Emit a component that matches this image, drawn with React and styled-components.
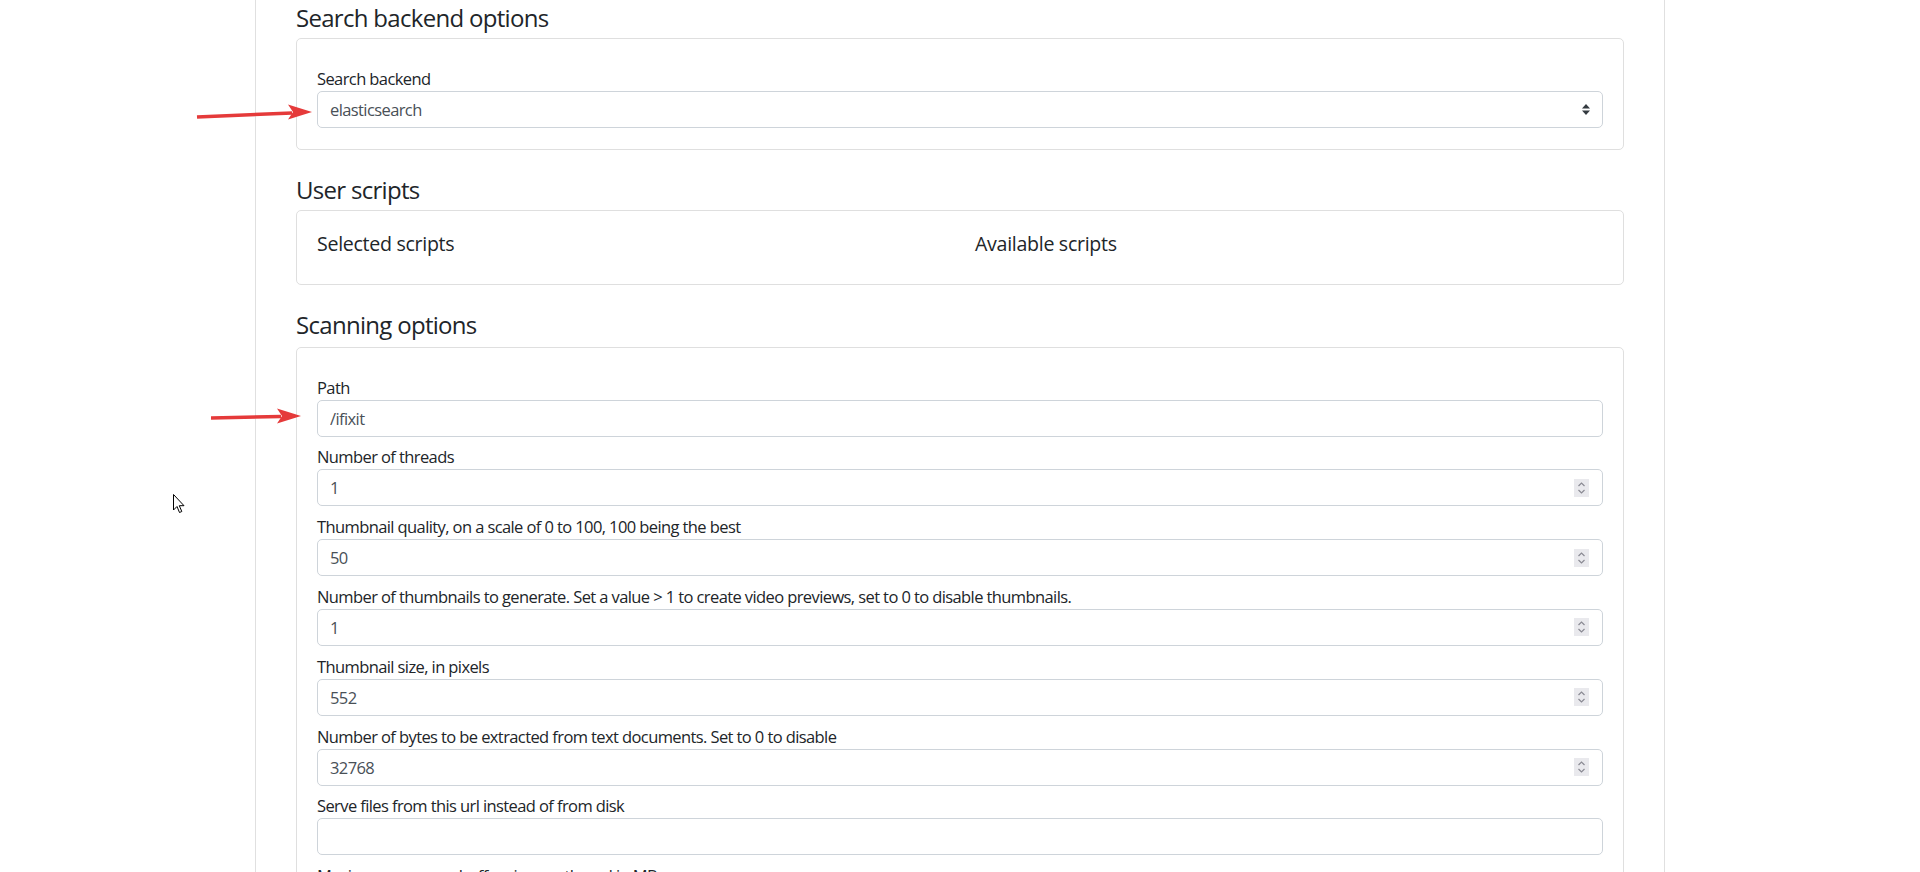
import React from 'react';
import styled, { createGlobalStyle } from 'styled-components';

const GlobalStyle = createGlobalStyle`
  html, body {
    margin: 0;
    padding: 0;
    background: #fff;
    overflow: hidden;
  }
  body {
    font-family: "Open Sans", "Noto Sans", sans-serif;
    color: #212529;
  }
  * {
    box-sizing: border-box;
  }
`;

const Page = styled.div`
  position: relative;
  height: 872px;
  overflow: hidden;
`;

const Container = styled.div`
  /* 가운데 컨테이너, 좌우 회색 선 */
  width: 1410px;
  min-height: 872px;
  margin: 0 auto;
  padding: 3px 40px 0 40px;
  border-left: 1px solid #e0e0e0;
  border-right: 1px solid #e0e0e0;
`;

const Section = styled.section`
  & + & {
    margin-top: 25px;
  }
`;

const SectionTitle = styled.h5`
  margin: 0 0 ${props => props.gap || 6}px 0;
  font-size: 24px;
  line-height: 29.4px;
  font-weight: 400;
  letter-spacing: -0.7px;
  color: #212529;
`;

const Card = styled.div`
  border: 1px solid #dfdfdf;
  border-radius: 5px;
  padding: ${props => props.pad || '27px 20px 21px 20px'};
`;

const Columns = styled.div`
  display: grid;
  grid-template-columns: 1fr 1fr;
  column-gap: 30px;
`;

const ColumnTitle = styled.h6`
  margin: 0;
  font-size: 19.6px;
  line-height: 23.5px;
  font-weight: 400;
  letter-spacing: -0.3px;
  color: #212529;
`;

const FormGroup = styled.div`
  & + & {
    margin-top: 7.8px;
  }
`;

const Label = styled.label`
  display: block;
  margin: 0;
  padding-top: 1px;
  font-size: 16.5px;
  line-height: 24px;
  letter-spacing: -0.6px;
  color: #212529;
`;

const Control = styled.div`
  position: relative;
`;

const Input = styled.input`
  display: block;
  width: 100%;
  height: 37px;
  margin: 0;
  padding: 0 40px 0 12px;
  border: 1px solid #ced4da;
  border-radius: 5px;
  background: #fff;
  font-family: inherit;
  font-size: 16.5px;
  letter-spacing: -0.6px;
  color: #495057;
  outline: none;
  appearance: none;
`;

const Adornment = styled.span`
  position: absolute;
  top: 50%;
  right: ${props => props.right || 14}px;
  transform: translateY(-50%);
  display: flex;
  align-items: center;
  justify-content: center;
  width: ${props => props.w || 15}px;
  height: ${props => props.h || 18}px;
  background: ${props => props.bg || 'transparent'};
  pointer-events: none;
`;

const Arrow = styled.svg`
  position: absolute;
  left: ${props => props.x}px;
  top: ${props => props.y}px;
  overflow: visible;
`;

const Cursor = styled.svg`
  position: absolute;
  left: 173px;
  top: 494px;
`;

function SelectCaret() {
  return (
    <Adornment right={12} w={10} h={12}>
      <svg width="8" height="11" viewBox="0 0 8 11">
        <path d="M4 0 L8 4.5 L0 4.5 Z" fill="#343a40" />
        <path d="M0 6.5 L8 6.5 L4 11 Z" fill="#343a40" />
      </svg>
    </Adornment>
  );
}

function Spinner() {
  return (
    <Adornment bg="#e9e9ed">
      <svg width="9" height="14" viewBox="0 0 9 14">
        <path d="M1.5 5 L4.5 2 L7.5 5" fill="none" stroke="#8a8a93" strokeWidth="1.2" />
        <path d="M1.5 9 L4.5 12 L7.5 9" fill="none" stroke="#8a8a93" strokeWidth="1.2" />
      </svg>
    </Adornment>
  );
}

const scanFields = [
  { label: 'Path', value: '/ifixit' },
  { label: 'Number of threads', value: '1', number: true },
  { label: 'Thumbnail quality, on a scale of 0 to 100, 100 being the best', value: '50', number: true },
  {
    label: 'Number of thumbnails to generate. Set a value > 1 to create video previews, set to 0 to disable thumbnails.',
    value: '1',
    number: true,
  },
  { label: 'Thumbnail size, in pixels', value: '552', number: true },
  { label: 'Number of bytes to be extracted from text documents. Set to 0 to disable', value: '32768', number: true },
  { label: 'Serve files from this url instead of from disk', value: '' },
  { label: 'Maximum memory buffer size per thread in MB', value: '2000', number: true },
];

function RedArrow({ x, y, length, rise }) {
  // 빨간 화살표 (주석 표시)
  const head = 24;
  return (
    <Arrow x={x} y={y - 10} width={length} height={20} viewBox={`0 0 ${length} 20`}>
      <line x1="0" y1={10 + rise} x2={length - head + 4} y2={10 + rise * 0.2} stroke="#e53a3a" strokeWidth="3.5" />
      <path
        d={`M${length} 10 L${length - head} ${2.5} L${length - head + 5} 10 L${length - head} ${17.5} Z`}
        fill="#e53a3a"
      />
    </Arrow>
  );
}

function App() {
  return (
    <Page>
      <GlobalStyle />
      <Container>
        <Section>
          <SectionTitle gap={5.3}>Search backend options</SectionTitle>
          <Card>
            <FormGroup>
              <Label>Search backend</Label>
              <Control>
                <Input readOnly value="elasticsearch" />
                <SelectCaret />
              </Control>
            </FormGroup>
          </Card>
        </Section>

        <Section>
          <SectionTitle>User scripts</SectionTitle>
          <Card pad="21px 20px 28.5px 20px">
            <Columns>
              <ColumnTitle>Selected scripts</ColumnTitle>
              <ColumnTitle>Available scripts</ColumnTitle>
            </Columns>
          </Card>
        </Section>

        <Section>
          <SectionTitle gap={7}>Scanning options</SectionTitle>
          <Card>
            {scanFields.map(field => (
              <FormGroup key={field.label}>
                <Label>{field.label}</Label>
                <Control>
                  <Input readOnly value={field.value} />
                  {field.number && <Spinner />}
                </Control>
              </FormGroup>
            ))}
          </Card>
        </Section>
      </Container>

      <RedArrow x={197} y={112} length={115} rise={5} />
      <RedArrow x={211} y={416} length={90} rise={2} />

      <Cursor width="13" height="20" viewBox="0 0 13 20">
        <path
          d="M0.5 0.5 L0.5 16 L4 12.5 L6.5 18.5 L8.8 17.5 L6.3 11.7 L11 11.7 Z"
          fill="#fff"
          stroke="#000"
          strokeWidth="1"
          strokeLinejoin="miter"
        />
      </Cursor>
    </Page>
  );
}

export default App;
